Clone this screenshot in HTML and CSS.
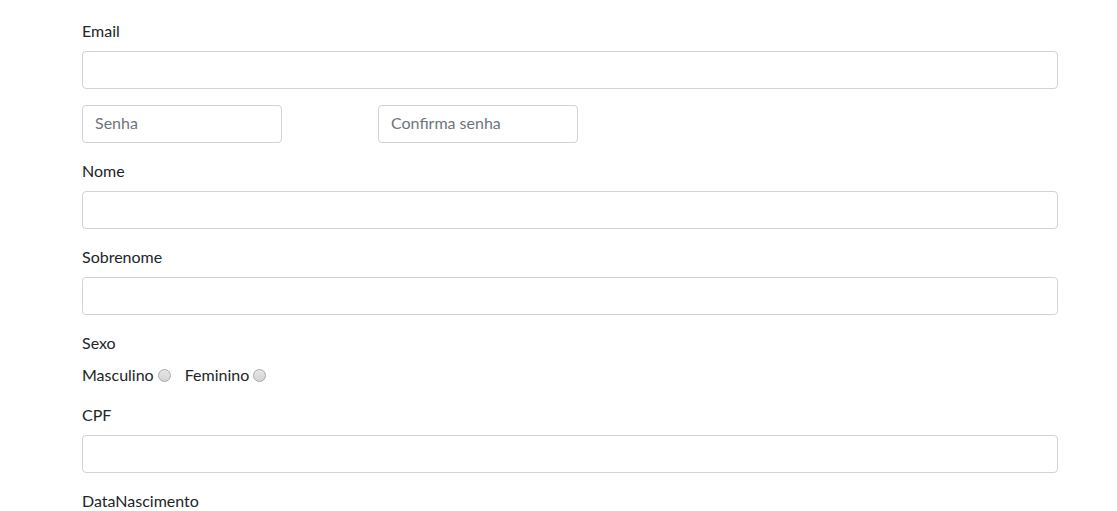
FILE: index.html
```html
<!DOCTYPE html>
<html lang="pt-BR">
<head>
    <meta charset="UTF-8">
    <meta name="viewport" content="width=device-width, initial-scale=1.0">
    <title>Cadastro</title>
    <link rel="stylesheet" href="styles.css">
</head>

<body>
    <form class="cadastro">
        <div class="form-group">
            <label for="email">Email</label>
            <input type="email" id="email" class="form-control">
        </div>

        <div class="form-group senha-row">
            <input type="password" class="form-control small" placeholder="Senha">
            <input type="password" class="form-control small" placeholder="Confirma senha">
        </div>

        <div class="form-group">
            <label for="nome">Nome</label>
            <input type="text" id="nome" class="form-control">
        </div>

        <div class="form-group">
            <label for="sobrenome">Sobrenome</label>
            <input type="text" id="sobrenome" class="form-control">
        </div>

        <div class="form-group">
            <label>Sexo</label>
            <div class="sexo-options">
                <label class="radio-inline">Masculino <input type="radio" name="sexo" value="M"></label>
                <label class="radio-inline">Feminino <input type="radio" name="sexo" value="F"></label>
            </div>
        </div>

        <div class="form-group">
            <label for="cpf">CPF</label>
            <input type="text" id="cpf" class="form-control">
        </div>

        <div class="form-group">
            <label for="nascimento">DataNascimento</label>
            <input type="text" id="nascimento" class="form-control">
        </div>
    </form>
</body>
</html>
```

FILE: styles.css
```css
body {
    margin: 0;
    font-family: Lato, "Noto Sans", sans-serif;
    font-size: 16px;
    line-height: 1.5;
    color: #212529;
    background-color: #fff;
}

.cadastro {
    width: 976px;
    padding: 19px 0 0 82px;
}

.form-group {
    margin-bottom: 16px;
}

label {
    display: inline-block;
    margin-bottom: 8px;
}

.form-control {
    display: block;
    width: 100%;
    height: 38px;
    padding: 4px 12px 8px;
    font-family: inherit;
    font-size: 16px;
    line-height: 1.5;
    color: #495057;
    background-color: #fff;
    border: 1px solid #ced4da;
    border-radius: 4px;
    box-sizing: border-box;
    outline: none;
}

.form-control::placeholder {
    color: #6c757d;
}

.senha-row {
    display: flex;
    gap: 96px;
}

.form-control.small {
    width: 200px;
}

.sexo-options {
    display: flex;
    height: 24px;
    align-items: center;
}

.radio-inline {
    margin: 0 14px 0 0;
    display: flex;
    align-items: center;
}

.radio-inline input {
    -webkit-appearance: none;
    appearance: none;
    width: 13px;
    height: 13px;
    margin: 0 0 0 4px;
    border: 1px solid #a9a9a9;
    border-radius: 50%;
    background: linear-gradient(#e6e6e6, #d4d4d4);
    box-sizing: border-box;
}
```
